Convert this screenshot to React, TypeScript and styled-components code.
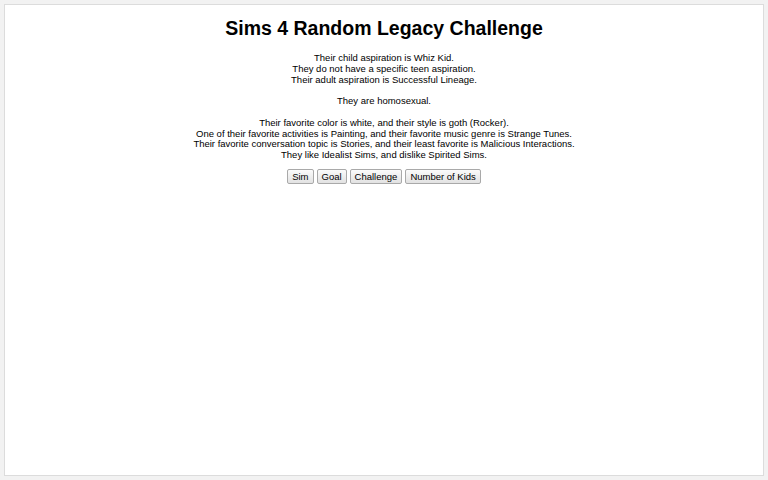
import React from "react";
import styled, { createGlobalStyle } from "styled-components";

const Global = createGlobalStyle`
  html, body { margin: 0; padding: 0; }
  body {
    background: #f2f2f2;
    font-family: "Liberation Sans", Arial, sans-serif;
    color: #000;
  }
`;

const Page = styled.div`
  box-sizing: border-box;
  height: 480px;
  padding: 4px;
`;

const Card = styled.main`
  box-sizing: border-box;
  height: 472px;
  background: #fff;
  border: 1px solid #dcdcdc;
  text-align: center;
  padding-top: 11px;
`;

const Title = styled.h1`
  margin: 0 0 13px;
  font-size: 19.5px;
  line-height: 24px;
  font-weight: bold;
`;

const Details = styled.div`
  font-size: 9.5px;
  line-height: 10.9px;
`;

const Para = styled.p`
  margin: 0 0 10.5px;
  &:last-child { margin-bottom: 8px; }
`;

const Buttons = styled.div`
  display: flex;
  justify-content: center;
  gap: 3px;
`;

const Btn = styled.button`
  box-sizing: border-box;
  height: 15px;
  font-family: "Liberation Sans", Arial, sans-serif;
  font-size: 9.5px;
  line-height: 11px;
  padding: 0 4px;
  background: linear-gradient(#fbfbfb, #e2e2e2);
  border: 1px solid #a9a9a9;
  border-radius: 2px;
  color: #000;
`;

export default function App() {
  return (
    <>
      <Global />
      <Page>
        <Card>
          <Title>Sims 4 Random Legacy Challenge</Title>
          <Details>
            <Para>
              Their child aspiration is Whiz Kid.
              <br />
              They do not have a specific teen aspiration.
              <br />
              Their adult aspiration is Successful Lineage.
            </Para>
            <Para>They are homosexual.</Para>
            <Para>
              Their favorite color is white, and their style is goth (Rocker).
              <br />
              One of their favorite activities is Painting, and their favorite music genre is Strange Tunes.
              <br />
              Their favorite conversation topic is Stories, and their least favorite is Malicious Interactions.
              <br />
              They like Idealist Sims, and dislike Spirited Sims.
            </Para>
          </Details>
          <Buttons>
            <Btn>Sim</Btn>
            <Btn>Goal</Btn>
            <Btn>Challenge</Btn>
            <Btn>Number of Kids</Btn>
          </Buttons>
        </Card>
      </Page>
    </>
  );
}
